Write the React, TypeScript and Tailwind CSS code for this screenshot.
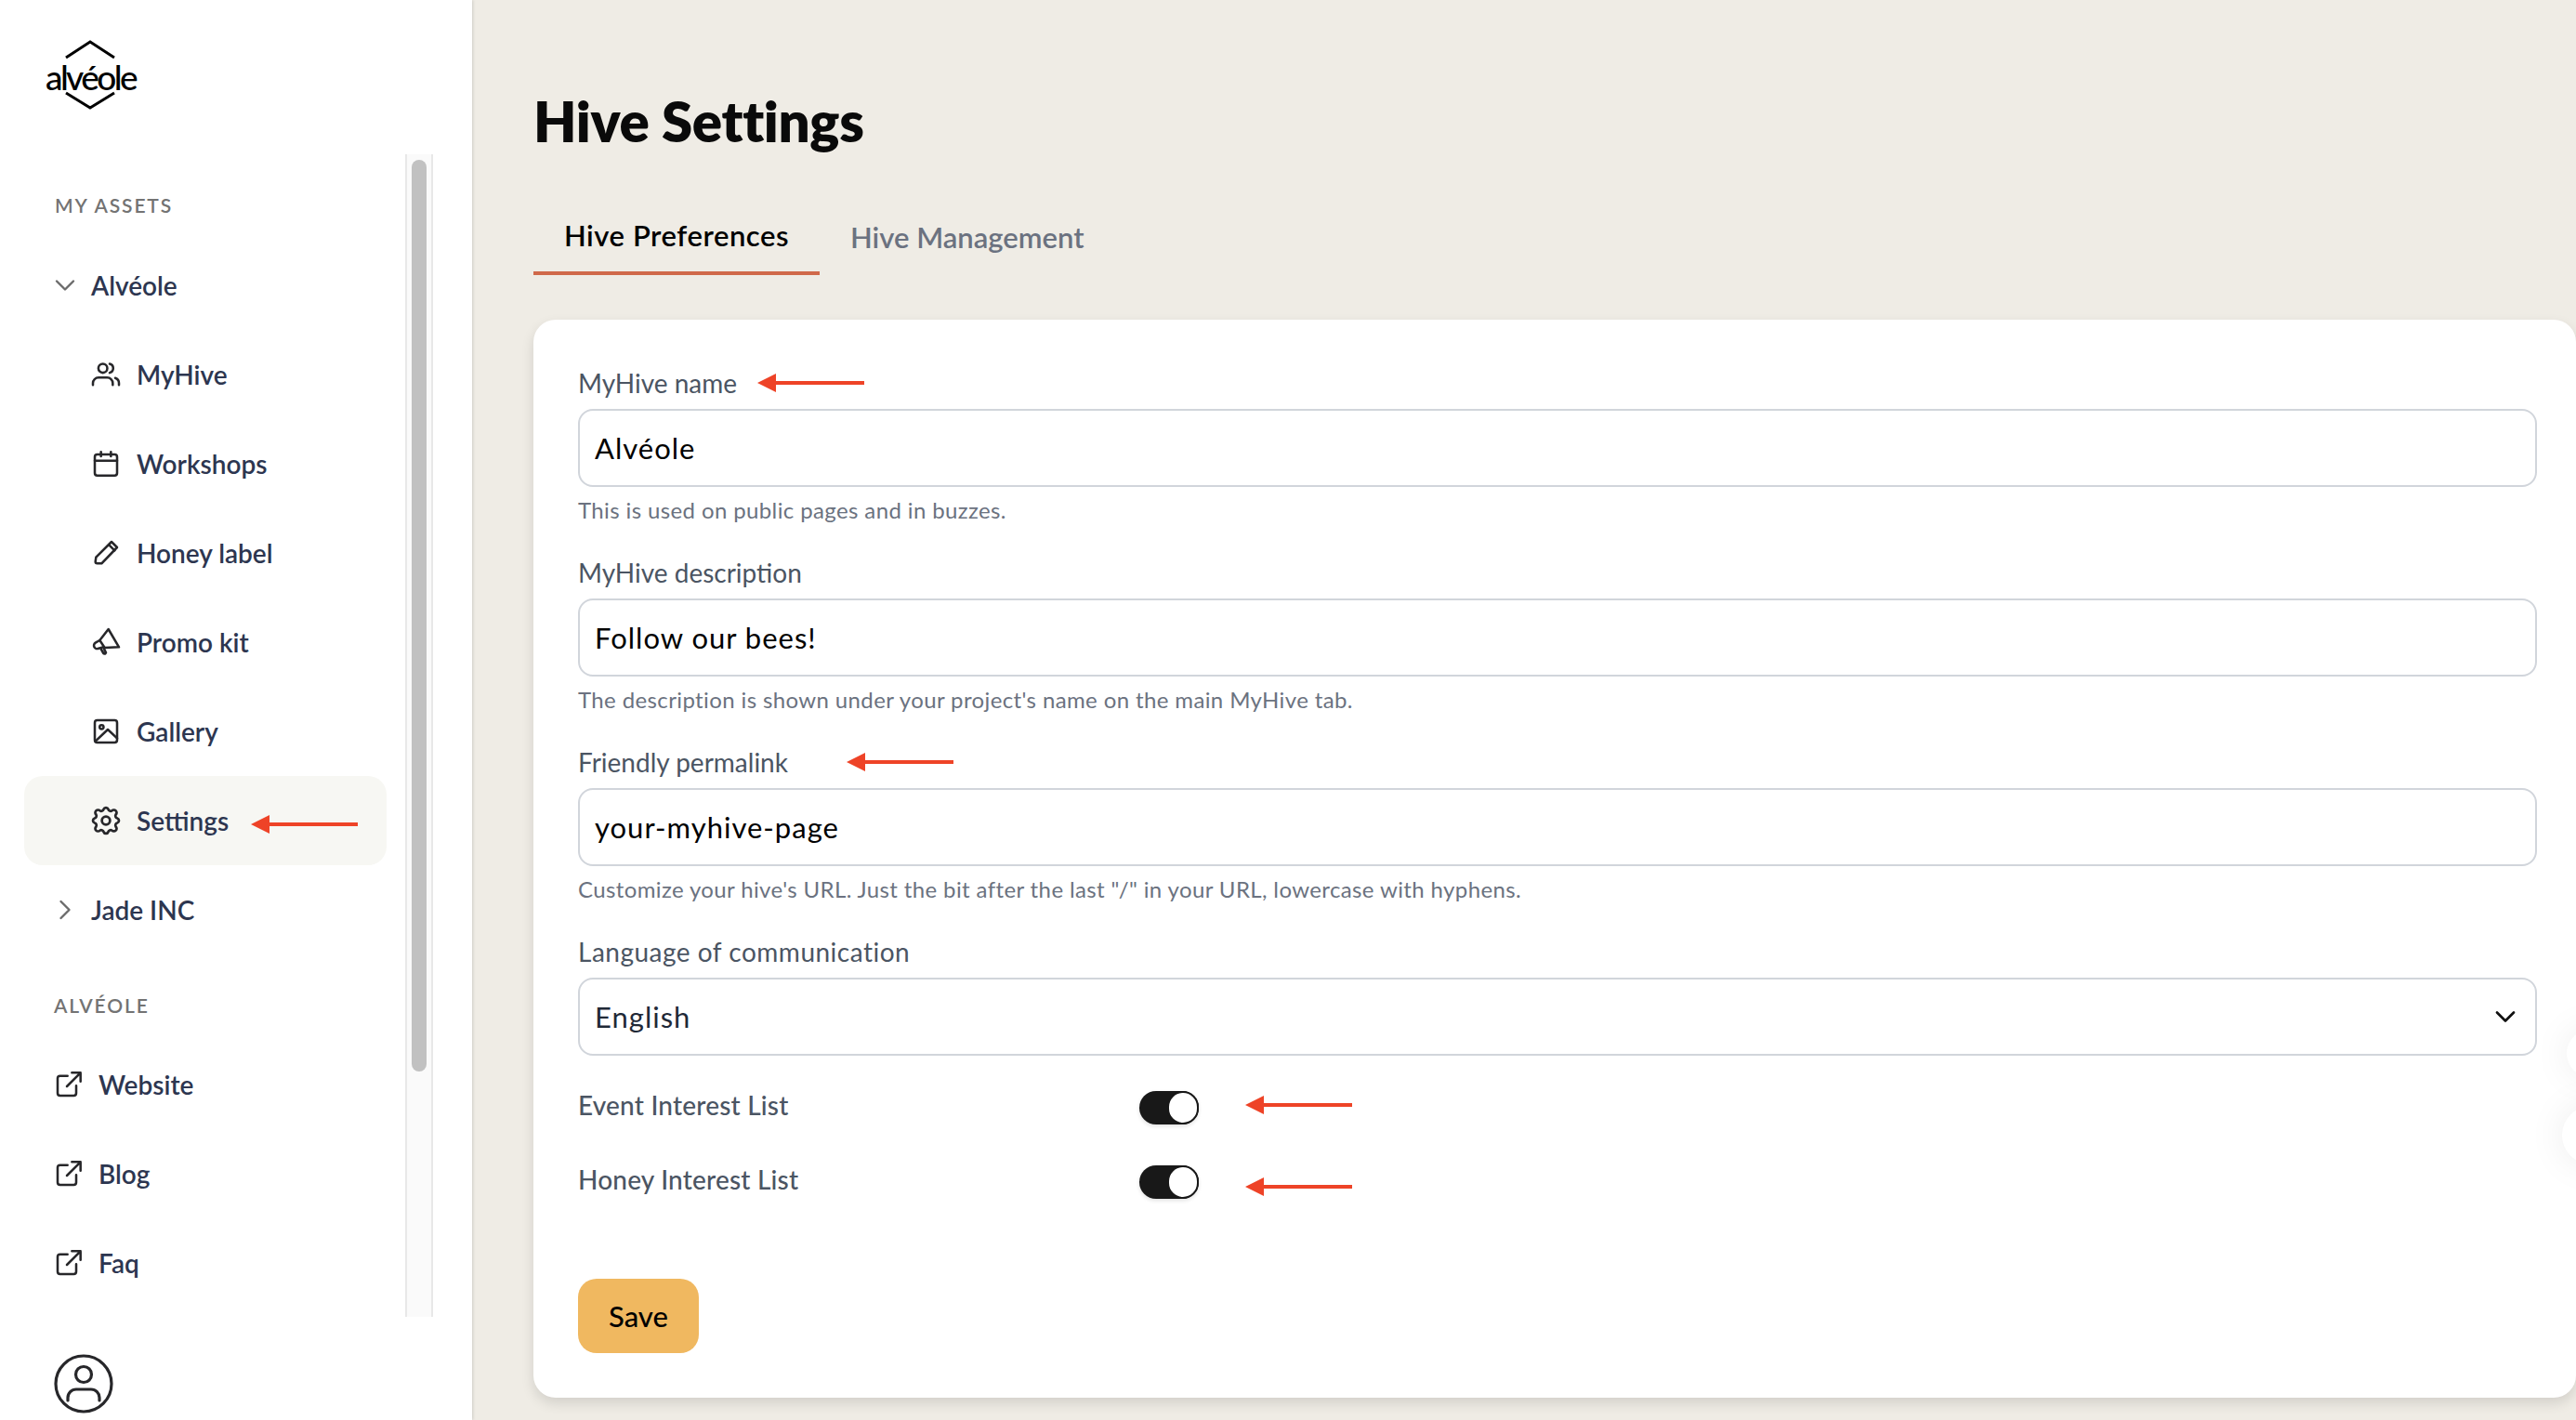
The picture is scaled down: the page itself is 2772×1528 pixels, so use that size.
import { ChevronDown, ChevronRight } from "lucide-react";
import type { ReactNode } from "react";

const Icon = ({ children, viewBox = "0 0 24 24" }: { children: ReactNode; viewBox?: string }) => (
  <svg
    width={32}
    height={32}
    viewBox={viewBox}
    fill="none"
    stroke="#27272a"
    strokeWidth={1.9}
    strokeLinecap="round"
    strokeLinejoin="round"
    className="shrink-0"
  >
    {children}
  </svg>
);

const UsersIcon = () => (
  <Icon>
    <circle cx="9.5" cy="7" r="3.6" />
    <path d="M1.5 20.5v-1.5a4.5 4.5 0 0 1 4.5-4.5h7a4.5 4.5 0 0 1 4.5 4.5v1.5" />
    <path d="M15 3.4a3.7 3.7 0 0 1 0 7.2" />
    <path d="M19.5 14.8a4.4 4.4 0 0 1 3 4.2v1.5" />
  </Icon>
);

const CalendarIcon = () => (
  <Icon>
    <rect x="3" y="4.5" width="18" height="17" rx="2" />
    <path d="M3 9.5h18M8 2.5v3.5M16 2.5v3.5" />
  </Icon>
);

const PencilIcon = () => (
  <Icon>
    <path d="M4 15.5 16.5 3 21 7.5 8.5 20.5H5a1.5 1.5 0 0 1-1.5-1.5z" />
    <path d="m14.5 5.5 4.5 4.5" />
  </Icon>
);

const MegaphoneIcon = () => (
  <Icon>
    <path d="M14 1.5 22.5 16l-11.5.5-4-6z" />
    <path d="M7 10.5 3.5 12.5a2.6 2.6 0 0 0 2.6 4.5L10 16" />
    <path d="m8 17.5 2 3.5a1 1 0 0 0 1.6.1l.4-.6-1.7-3.5" />
  </Icon>
);

const ImageIcon = () => (
  <Icon>
    <rect x="3" y="3" width="18" height="18" rx="2" />
    <circle cx="8.5" cy="8.5" r="1.6" />
    <path d="m3.5 20 10-9.5 7.5 7" />
  </Icon>
);

const GearIcon = () => (
  <Icon viewBox="1 1 22 22">
    <path d="M10.3 3.6a1.8 1.8 0 0 1 3.4 0 1.8 1.8 0 0 0 2.7 1.1 1.8 1.8 0 0 1 2.9 2.9 1.8 1.8 0 0 0 1.1 2.7 1.8 1.8 0 0 1 0 3.4 1.8 1.8 0 0 0-1.1 2.7 1.8 1.8 0 0 1-2.9 2.9 1.8 1.8 0 0 0-2.7 1.1 1.8 1.8 0 0 1-3.4 0 1.8 1.8 0 0 0-2.7-1.1 1.8 1.8 0 0 1-2.9-2.9 1.8 1.8 0 0 0-1.1-2.7 1.8 1.8 0 0 1 0-3.4 1.8 1.8 0 0 0 1.1-2.7 1.8 1.8 0 0 1 2.9-2.9 1.8 1.8 0 0 0 2.7-1.1z" />
    <circle cx="12" cy="12" r="3" />
  </Icon>
);

const LinkIcon = () => (
  <Icon>
    <path d="M11 5H5a2 2 0 0 0-2 2v12a2 2 0 0 0 2 2h11a2 2 0 0 0 2-2v-6" />
    <path d="M14.5 2.5H21.5V9.5M21.5 2.5 10.5 13.5" />
  </Icon>
);

const Arrow = ({ className }: { className: string }) => (
  <svg width="115" height="22" viewBox="0 0 115 22" className={className}>
    <path d="M0 11 20 1v8h95v4H20v8z" fill="#ee4327" />
  </svg>
);

const Logo = () => (
  <div className="relative h-[166px] w-full">
    <svg width="64" height="84" viewBox="0 0 64 84" className="absolute left-[65px] top-[40px]" fill="none" stroke="#000" strokeWidth="3">
      <path d="M6 22 32 5l26 17" />
      <path d="M6 60 32 76l26-16" />
    </svg>
    <span className="absolute left-[49px] top-[60px] text-[37px] leading-[46px] font-medium tracking-[-2.6px] text-black">alvéole</span>
  </div>
);

const rowCls = "flex h-[96px] items-center text-[28px] font-semibold text-[#2d3650]";
const headingCls = "text-[21px] leading-[30px] font-semibold tracking-[0.09em] text-[#737373]";

const SubItem = ({ icon, label, active, children }: { icon: ReactNode; label: string; active?: boolean; children?: ReactNode }) => (
  <div className={`${rowCls} relative ml-[26px] mr-[20px] gap-[17px] rounded-[20px] pl-[72px] ${active ? "bg-[#f7f7f3]" : ""}`}>
    {icon}
    <span>{label}</span>
    {children}
  </div>
);

const Sidebar = () => (
  <aside className="relative z-10 flex h-full w-[508px] shrink-0 flex-col bg-white shadow-[1px_0_3px_rgba(0,0,0,0.14)]">
    <Logo />
    <div className="flex h-[1251px]">
      <nav className="w-[436px] pt-[40px]">
        <div className={`${headingCls} pl-[59px]`}>MY ASSETS</div>
        <div className={`${rowCls} mt-[23px] gap-[10px] pl-[52px]`}>
          <ChevronDown size={36} color="#6b6b6b" strokeWidth={1.6} />
          <span>Alvéole</span>
        </div>
        <SubItem icon={<UsersIcon />} label="MyHive" />
        <SubItem icon={<CalendarIcon />} label="Workshops" />
        <SubItem icon={<PencilIcon />} label="Honey label" />
        <SubItem icon={<MegaphoneIcon />} label="Promo kit" />
        <SubItem icon={<ImageIcon />} label="Gallery" />
        <SubItem icon={<GearIcon />} label="Settings" active>
          <Arrow className="absolute left-[244px] top-[41px]" />
        </SubItem>
        <div className={`${rowCls} gap-[10px] pl-[52px]`}>
          <ChevronRight size={36} color="#6b6b6b" strokeWidth={1.6} />
          <span>Jade INC</span>
        </div>
        <div className={`${headingCls} mt-[40px] pl-[58px]`}>ALVÉOLE</div>
        <div className="mt-[22px]">
          {["Website", "Blog", "Faq"].map((label) => (
            <div key={label} className={`${rowCls} gap-[16px] pl-[58px]`}>
              <LinkIcon />
              <span>{label}</span>
            </div>
          ))}
        </div>
      </nav>
      <div className="flex w-[30px] justify-center border-x-2 border-[#e8e8e8] bg-[#fafafa] pt-[6px]">
        <div className="h-[981px] w-[16px] rounded-full bg-[#c1c1c1]" />
      </div>
    </div>
    <div className="mt-[40px] pl-[58px]">
      <svg width="64" height="64" viewBox="0 0 64 64" fill="none" stroke="#27272a" strokeWidth="3.2" strokeLinecap="round">
        <circle cx="32" cy="32" r="30" />
        <circle cx="32" cy="22" r="8.5" />
        <path d="M15 50v-3a9 9 0 0 1 9-9h16a9 9 0 0 1 9 9v3" />
      </svg>
    </div>
  </aside>
);

const inputCls =
  "h-[84px] w-full rounded-[16px] border-2 border-[#d1d5db] bg-white px-[16px] text-[31px] tracking-[1px] outline-none";

const Field = ({ label, value, hint, arrowLeft }: { label: string; value: string; hint: string; arrowLeft?: string }) => (
  <div className="relative mb-[37px]">
    <label className="block text-[28px] leading-[28px] text-[#4b5563]">{label}</label>
    {arrowLeft && <Arrow className={`absolute top-[3px] ${arrowLeft}`} />}
    <input readOnly value={value} className={`${inputCls} mt-[14px] text-black`} />
    <p className="mt-[9px] text-[24px] leading-[32px] tracking-[0.38px] text-[#6b7280]">{hint}</p>
  </div>
);

const Toggle = () => (
  <div className="flex h-[36px] w-[64px] justify-end rounded-full bg-[#181818] shadow-[0_2px_4px_rgba(0,0,0,0.12)]">
    <div className="h-[36px] w-[34px] rounded-full border-2 border-[#181818] bg-white" />
  </div>
);

const ToggleRow = ({ label, arrowTop }: { label: string; arrowTop: string }) => (
  <div className="relative flex h-[36px] items-center">
    <span className="w-[604px] -translate-y-[3px] text-[28px] font-medium tracking-[0.2px] text-[#4b5563]">{label}</span>
    <Toggle />
    <Arrow className={`absolute left-[718px] ${arrowTop}`} />
  </div>
);

const Card = () => (
  <section className="mt-[48px] h-[1160px] rounded-[24px] bg-white pl-[48px] pr-[42px] pt-[54px] shadow-[0_6px_14px_rgba(0,0,0,0.12)]">
    <Field label="MyHive name" value="Alvéole" hint="This is used on public pages and in buzzes." arrowLeft="left-[193px]" />
    <Field
      label="MyHive description"
      value="Follow our bees!"
      hint="The description is shown under your project's name on the main MyHive tab."
    />
    <Field
      label="Friendly permalink"
      value="your-myhive-page"
      hint={"Customize your hive's URL. Just the bit after the last \"/\" in your URL, lowercase with hyphens."}
      arrowLeft="left-[289px]"
    />
    <label className="block text-[28px] leading-[28px] tracking-[0.5px] text-[#4b5563]">Language of communication</label>
    <div className={`${inputCls} mt-[14px] flex items-center justify-between pr-[14px] text-[#1f2937]`}>
      <span>English</span>
      <ChevronDown size={36} color="#111" strokeWidth={1.8} />
    </div>
    <div className="mt-[38px] flex flex-col gap-[44px]">
      <ToggleRow label="Event Interest List" arrowTop="top-[4px]" />
      <ToggleRow label="Honey Interest List" arrowTop="top-[12px]" />
    </div>
    <button className="mt-[86px] h-[80px] w-[130px] rounded-[20px] bg-[#f0b860] text-[31px] font-medium text-black">Save</button>
  </section>
);

export default function App() {
  return (
    <div className="relative flex h-[1528px] w-[2772px] overflow-hidden bg-[#efece5] font-[Lato,sans-serif]">
      <Sidebar />
      <main className="flex-1 pl-[66px] pt-[94px]">
        <h1 className="h-[72px] text-[60px] leading-[72px] font-extrabold tracking-[-0.35px] text-[#0a0a0a]">Hive Settings</h1>
        <div className="mt-[50px] flex h-[80px] whitespace-nowrap">
          <div className="h-[80px] w-[308px] border-b-4 border-[#d0694a] pl-[33px] pt-[19px] text-[31px] leading-[36px] font-semibold tracking-[0.55px] text-black">
            Hive Preferences
          </div>
          <div className="pl-[33px] pt-[21px] text-[31px] leading-[36px] font-semibold text-[#6b7280]">Hive Management</div>
        </div>
        <Card />
      </main>
      <div className="absolute left-[2762px] top-[1108px] h-[51px] w-[51px] rounded-full bg-white shadow-[0_0_40px_rgba(0,0,0,0.08)]" />
      <div className="absolute left-[2757px] top-[1190px] h-[63px] w-[63px] rounded-full bg-white shadow-[0_0_40px_rgba(0,0,0,0.08)]" />
    </div>
  );
}
